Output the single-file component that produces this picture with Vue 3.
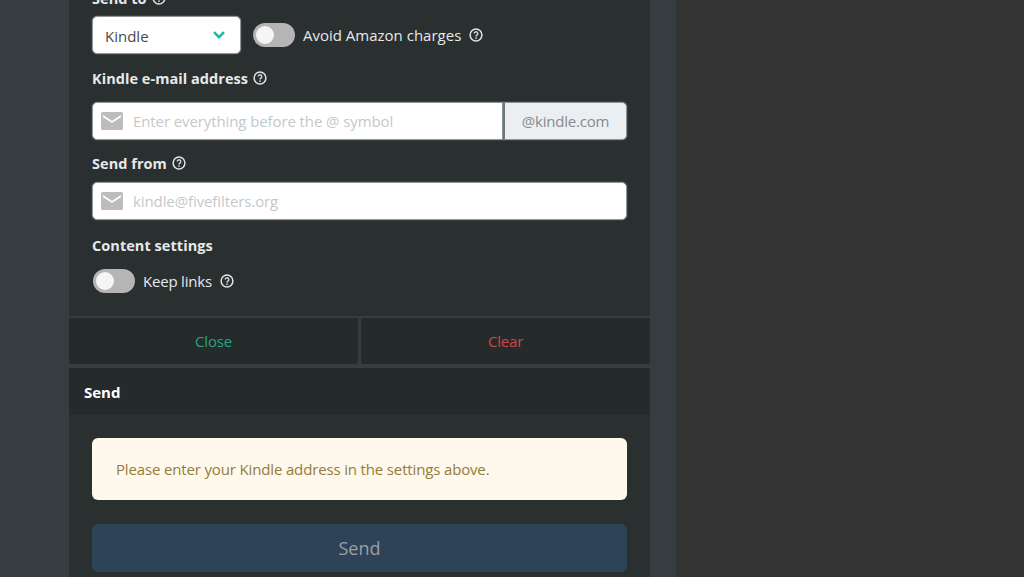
<template>
  <div class="page">
    <div class="column">
      <section class="panel settings">
        <label class="field-label cut">Send to <HelpIcon /></label>
        <div class="send-to">
          <div class="select">
            <span>Kindle</span>
            <svg class="chevron" width="14" height="10" viewBox="0 0 14 10"><path d="M2 2.2l5 5 5-5" fill="none" stroke="#1abc9c" stroke-width="2.6" /></svg>
          </div>
          <div class="toggle"><span class="knob"></span></div>
          <span class="toggle-text">Avoid Amazon charges</span>
          <span class="help-gap"><HelpIcon /></span>
        </div>

        <label class="field-label kindle-label">Kindle e-mail address <HelpIcon /></label>
        <div class="input-row">
          <div class="input joined">
            <MailIcon />
            <span class="placeholder">Enter everything before the @ symbol</span>
          </div>
          <div class="addon">@kindle.com</div>
        </div>

        <label class="field-label from-label">Send from <HelpIcon /></label>
        <div class="input">
          <MailIcon />
          <span class="placeholder">kindle@fivefilters.org</span>
        </div>

        <label class="field-label content-label">Content settings</label>
        <div class="keep-links">
          <div class="toggle"><span class="knob"></span></div>
          <span class="toggle-text tight">Keep links</span>
          <span class="help-gap"><HelpIcon /></span>
        </div>
      </section>

      <div class="actions">
        <button class="close">Close</button>
        <button class="clear">Clear</button>
      </div>

      <section class="send-card">
        <header class="send-head">Send</header>
        <div class="send-body">
          <div class="notice">Please enter your Kindle address in the settings above.</div>
          <button class="send-button">Send</button>
        </div>
      </section>
    </div>
  </div>
</template>

<script setup>
import { h } from 'vue';

const HelpIcon = () =>
  h('svg', { class: 'help', width: 14, height: 14, viewBox: '0 0 14 14' }, [
    h('circle', { cx: 7, cy: 7, r: 5.9, fill: 'none', stroke: 'currentColor', 'stroke-width': 1.5 }),
    h('path', { d: 'M5.2 5.6a1.8 1.8 0 1 1 2.7 1.5c-.6.4-.9.7-.9 1.3', fill: 'none', stroke: 'currentColor', 'stroke-width': 1.3 }),
    h('circle', { cx: 7, cy: 10.1, r: 0.85, fill: 'currentColor' })
  ]);

const MailIcon = () =>
  h('svg', { class: 'mail', width: 22, height: 18, viewBox: '0 0 22 18' }, [
    h('rect', { width: 22, height: 18, rx: 1.5, fill: '#bdbdbd' }),
    h('path', { d: 'M2 4l9 6 9-6', fill: 'none', stroke: '#fff', 'stroke-width': 1.6 })
  ]);
</script>

<style>
html,
body {
  margin: 0;
  background: #333333;
}
</style>

<style scoped>
.page {
  height: 577px;
  overflow: hidden;
  width: 676px;
  background: #363d40;
  font-family: "Open Sans", "Liberation Sans", sans-serif;
  font-size: 15px;
  color: #e6e9ea;
}

.column {
  width: 581px;
  margin-left: 69px;
  margin-top: -12px;
}

.settings {
  background: #2a2f30;
  padding: 0 23px 23px;
}

.field-label {
  display: flex;
  align-items: center;
  gap: 5px;
  height: 22px;
  font-weight: 700;
  font-size: 14.5px;
  letter-spacing: 0.05px;
  margin-top: 12px;
  margin-bottom: 8px;
}

.field-label.cut {
  margin-top: 0;
  margin-bottom: 7px;
  height: 20px;
}

.kindle-label {
  margin-bottom: 13px;
}

.help {
  display: block;
  color: #dfe3e4;
}

.send-to {
  display: flex;
  align-items: center;
  height: 40px;
}

.select {
  width: 149px;
  height: 38px;
  box-sizing: border-box;
  background: #fff;
  border: 1px solid #8b9496;
  box-shadow: 0 0 0 1px rgba(125, 135, 137, 0.2);
  border-radius: 5px;
  display: flex;
  align-items: center;
  justify-content: space-between;
  padding: 2px 14px 0 12px;
  color: #4a4a4a;
  margin-right: 12px;
}

.chevron {
  margin-top: -3px;
}

.toggle {
  width: 42px;
  height: 24px;
  flex: none;
  background: #b5b5b5;
  border-radius: 12px;
  position: relative;
}

.knob {
  position: absolute;
  left: 3px;
  top: 3px;
  width: 18px;
  height: 18px;
  border-radius: 50%;
  background: #f5f5f5;
}

.toggle-text {
  margin-left: 8px;
}

.toggle-text.tight {
  letter-spacing: -0.2px;
}

.help-gap {
  margin-left: 8px;
  display: block;
}

.input-row {
  display: flex;
  width: 535px;
}

.input {
  display: flex;
  align-items: center;
  gap: 10px;
  height: 38px;
  width: 535px;
  box-sizing: border-box;
  background: #fff;
  border: 1px solid #8b9496;
  box-shadow: 0 0 0 1px rgba(125, 135, 137, 0.2);
  border-radius: 5px;
  padding-left: 8px;
}

.input.joined {
  width: 411px;
  border-radius: 5px 0 0 5px;
}

.addon {
  flex: 1;
  height: 38px;
  box-sizing: border-box;
  background: #ebeff2;
  border: 1px solid #8b9496;
  border-left: 2px solid #6f787a;
  box-shadow: 0 0 0 1px rgba(125, 135, 137, 0.2);
  border-radius: 0 5px 5px 0;
  color: #8a8a8a;
  display: flex;
  align-items: center;
  justify-content: center;
  letter-spacing: -0.2px;
}

.placeholder {
  color: #c4c8ca;
  letter-spacing: -0.1px;
}

.mail {
  display: block;
  flex: none;
}

.keep-links {
  display: flex;
  align-items: center;
  height: 24px;
  padding-left: 1px;
}

.content-label {
  margin-top: 14px;
  margin-bottom: 13px;
}

.actions {
  display: flex;
  gap: 3px;
  border-top: 2px solid #363d40;
}

.actions button {
  flex: 1;
  height: 46px;
  background: #252a2b;
  border: none;
  font: inherit;
  letter-spacing: -0.2px;
  border-radius: 0 0 3px 3px;
}

.close {
  color: #2aa385;
}

.clear {
  color: #d04545;
}

.send-card {
  margin-top: 4px;
  background: #2a2f30;
  border-radius: 3px 3px 0 0;
}

.send-head {
  height: 47px;
  box-sizing: border-box;
  background: #252a2b;
  padding: 0 15px;
  display: flex;
  align-items: center;
  font-weight: 700;
  font-size: 15px;
  color: #fff;
}

.send-body {
  padding: 23px 23px 20px;
}

.notice {
  height: 62px;
  box-sizing: border-box;
  background: #fef8ed;
  border-radius: 6px;
  padding: 0 24px;
  display: flex;
  align-items: center;
  color: #947c3a;
  letter-spacing: -0.15px;
}

.send-button {
  display: block;
  width: 100%;
  height: 48px;
  margin-top: 24px;
  background: #2f4358;
  border: none;
  border-radius: 6px;
  font: inherit;
  font-size: 18px;
  color: #9a9fa3;
}
</style>
